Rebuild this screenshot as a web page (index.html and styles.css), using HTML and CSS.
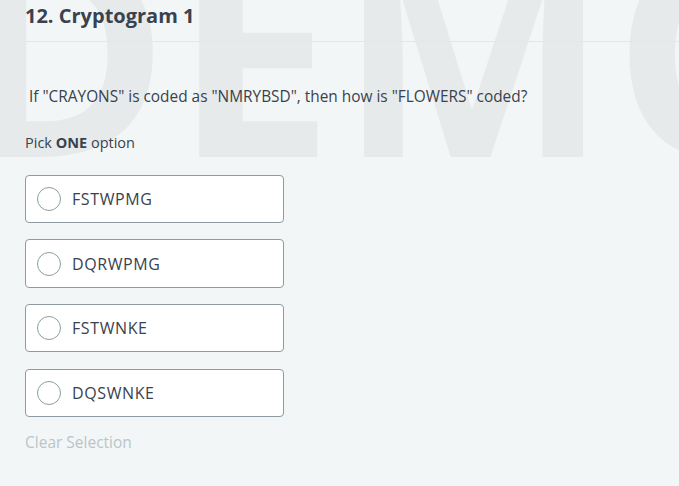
FILE: index.html
```html
<!DOCTYPE html>
<html lang="en">

<head>
    <meta charset="UTF-8">
    <title>Cryptogram 1</title>
    <link rel="stylesheet" href="styles.css">
</head>

<body>

    <div class="watermark">DEMO</div>

    <div class="question">
        <div class="question-head">
            <h2>12. Cryptogram 1</h2>
        </div>

        <p class="question-text">&nbsp;If "CRAYONS" is coded as "NMRYBSD", then how is "FLOWERS" coded?</p>
        <p class="pick">Pick <strong>ONE</strong> option</p>

        <div class="options">
            <label class="option">
                <span class="radio"></span>
                <span class="option-text">FSTWPMG</span>
            </label>
            <label class="option">
                <span class="radio"></span>
                <span class="option-text">DQRWPMG</span>
            </label>
            <label class="option">
                <span class="radio"></span>
                <span class="option-text">FSTWNKE</span>
            </label>
            <label class="option">
                <span class="radio"></span>
                <span class="option-text">DQSWNKE</span>
            </label>
        </div>

        <div class="clear-selection">Clear Selection</div>
    </div>

</body>

</html>
```

FILE: styles.css
```css
* {
    margin: 0;
    padding: 0;
    box-sizing: border-box;
}

html,
body {
    height: 100%;
    overflow: hidden;
}

body {
    font-family: "Open Sans", "Noto Sans", sans-serif;
    background: #f3f6f7;
    color: #39424e;
    position: relative;
}

/* big faded word behind the question */
.watermark {
    position: absolute;
    top: -98px;
    left: -43px;
    font-size: 287px;
    line-height: 1;
    font-weight: 700;
    letter-spacing: 4px;
    color: #e7eaeb;
    white-space: nowrap;
    z-index: 0;
    user-select: none;
}

.question {
    position: relative;
    z-index: 1;
    padding-left: 25px;
}

.question-head {
    padding: 2px 0 12px;
    border-bottom: 1px solid #e3e7e8;
}

.question-head h2 {
    font-size: 20px;
    font-weight: 700;
    line-height: 27px;
    color: #39424e;
}

.question-text {
    margin-top: 45px;
    font-size: 15.4px;
    line-height: 20px;
}

.pick {
    margin-top: 27px;
    font-size: 14.5px;
    line-height: 18px;
}

.pick strong {
    font-weight: 700;
}

.options {
    margin-top: 22.6px;
    display: flex;
    flex-direction: column;
    gap: 16.5px;
}

.option {
    width: 259px;
    height: 48.3px;
    display: flex;
    align-items: center;
    gap: 11px;
    padding-left: 11px;
    background: #fff;
    border: 1px solid #8c9ca1;
    border-radius: 4px;
}

.radio {
    width: 24px;
    height: 24px;
    border: 1.5px solid #8a9da2;
    border-radius: 50%;
    flex-shrink: 0;
}

.option-text {
    font-size: 16px;
    letter-spacing: 0.6px;
    color: #39424e;
}

.clear-selection {
    margin-top: 14px;
    font-size: 15.5px;
    line-height: 22px;
    color: #b9c5c7;
}
```
